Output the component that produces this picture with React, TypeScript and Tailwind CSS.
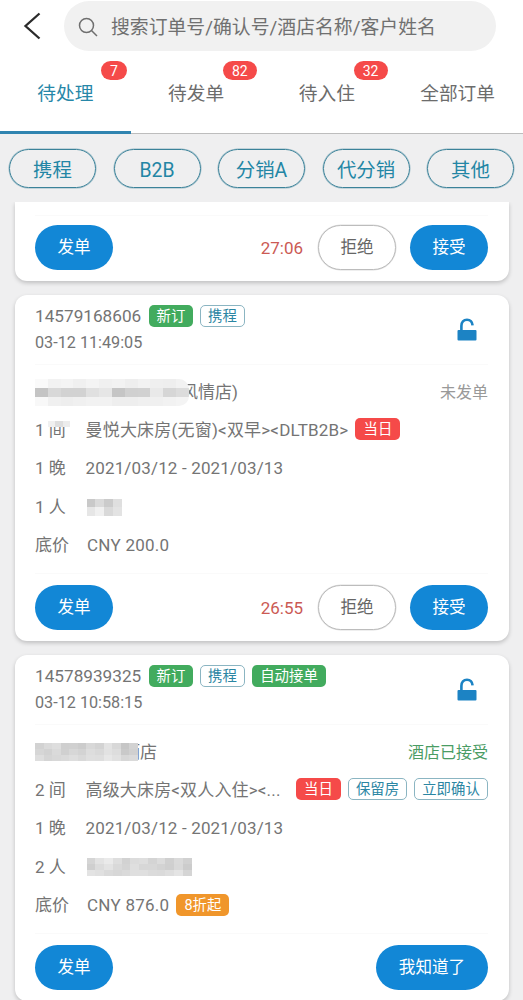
import React from "react";
import clsx from "clsx";

type Cell = string;

function Mosaic({ rows, className }: { rows: Cell[][]; className: string }) {
  return (
    <span className={clsx("flex flex-col overflow-hidden", className)}>
      {rows.map((row, i) => (
        <span key={i} className="flex flex-1">
          {row.map((c, j) => (
            <span key={j} className="flex-1" style={{ backgroundColor: "#" + c }} />
          ))}
        </span>
      ))}
    </span>
  );
}

const tagTones = {
  green: "bg-[#42ab5e] text-white",
  red: "bg-[#f54a49] text-white",
  orange: "bg-[#f0962b] text-white",
  outline: "border border-[#8bb5c2] bg-white text-[#2b86a3]",
};

function Tag({ tone, className, children }: { tone: keyof typeof tagTones; className: string; children: React.ReactNode }) {
  return (
    <span
      className={clsx(
        "flex h-[22px] shrink-0 items-center justify-center rounded-[5px] pt-[2px] text-[14.4px] leading-none tracking-normal whitespace-nowrap",
        tagTones[tone],
        className,
      )}
    >
      {children}
    </span>
  );
}

function PillButton({ outline, wide, children }: { outline?: boolean; wide?: boolean; children: React.ReactNode }) {
  return (
    <button
      className={clsx(
        "flex h-[45px] items-center justify-center rounded-full pt-[2px] text-[16.6px] leading-none",
        wide ? "w-[112px]" : "w-[78px]",
        outline ? "border border-[#bcbcbc] bg-white text-[#666] shadow-[0_0_0_0.5px_#bcbcbc80]" : "bg-[#1287d6] text-white",
      )}
    >
      {children}
    </button>
  );
}

function UnlockIcon() {
  return (
    <svg width="20" height="23" viewBox="0 0 20 23" className="mt-[23px] mr-[11px] shrink-0">
      <path d="M4.400 12.500V8C4.400 4 6.600 1.800 10 1.800c3.200 0 5.200 2 5.600 5.600" fill="none" stroke="#1c83c4" strokeWidth="2.600" />
      <rect x="0.500" y="12" width="19" height="10.500" rx="1" fill="#1c83c4" />
    </svg>
  );
}

function Row({ label, children }: { label: React.ReactNode; children: React.ReactNode }) {
  return (
    <div className="flex h-[38.3px] items-center tracking-[0.16px]">
      <span className="w-[50.5px] shrink-0 tracking-normal whitespace-nowrap">{label}</span>
      {children}
    </div>
  );
}

function Actions({ timer }: { timer?: string }) {
  return (
    <div className="flex items-center justify-between">
      <PillButton>发单</PillButton>
      {timer ? (
        <div className="flex items-center gap-[14px]">
          <span className="mr-[1px] pt-[1px] text-[17px] leading-none text-[#cb5a54]">{timer}</span>
          <PillButton outline>拒绝</PillButton>
          <PillButton>接受</PillButton>
        </div>
      ) : (
        <PillButton wide>我知道了</PillButton>
      )}
    </div>
  );
}

function Card({
  id,
  time,
  auto,
  hotel,
  status,
  children,
  timer,
}: {
  id: string;
  time: string;
  auto?: boolean;
  hotel: React.ReactNode;
  status: React.ReactNode;
  children: React.ReactNode;
  timer?: string;
}) {
  return (
    <section className="flex h-[346px] shrink-0 flex-col rounded-[12px] bg-white pr-[21px] pl-5 shadow-[0_2px_4px_rgba(0,0,0,0.2)]">
      <div className="flex h-[70px] shrink-0 justify-between border-b border-[#fafafa]">
        <div className="flex flex-col pt-[10px]">
          <div className="flex h-[22px] items-center">
            <span className="w-[114px] pt-[2px] text-[17.2px] leading-none text-[#747474]">{id}</span>
            <Tag tone="green" className="w-[44px]">新订</Tag>
            <Tag tone="outline" className="ml-[7px] w-[45px]">携程</Tag>
            {auto && <Tag tone="green" className="ml-[7px] w-[74px]">自动接单</Tag>}
          </div>
          <span className="mt-[7px] text-[16.200px] leading-[18px] text-[#747474]">{time}</span>
        </div>
        <UnlockIcon />
      </div>
      <div className="flex h-[209px] shrink-0 flex-col border-b border-[#fafafa] pt-[8px] text-[17px] leading-none text-[#747474]">
        <div className="flex h-[38.3px] items-center justify-between">
          {hotel}
          {status}
        </div>
        {children}
      </div>
      <div className="pt-[11px]">
        <Actions timer={timer} />
      </div>
    </section>
  );
}

const tabs = [
  { name: "待处理", count: "7", badge: "left-[101px] w-[26px]" },
  { name: "待发单", count: "82", badge: "left-[92px] w-[34px]" },
  { name: "待入住", count: "32", badge: "left-[92px] w-[34px]" },
  { name: "全部订单" },
];

const filters = ["携程", "B2B", "分销A", "代分销", "其他"];

const hotelMosaicA = [
  ["fafafa", "f2f2f2", "f4f4f4", "f0f0f0", "f4f4f4", "f0f0f0", "f2f2f2", "eeeeee", "f2f2f2", "efefef", "eeeeee", "f2f2f2"],
  ["c4c4c4", "d8d8d8", "d2d2d2", "d2d2d2", "e0e0e0", "e6e6e6", "c5c5c5", "d0d0d0", "d1d1d1", "e9e9e9", "d6d6d6", "dcdcdc"],
  ["f8f8f8", "f0f0f0", "eeeeee", "f0f0f0", "f2f2f2", "f2f2f2", "eeeeee", "eeeeee", "f0f0f0", "f0f0f0", "f2f2f2", "f4f4f4"],
];

const hotelMosaicB = [
  ["d2d2d2", "dadada", "dedede", "cfcfcf", "d0d0d0", "cccccc", "d8d8d8", "d3d3d3", "e3e3e3", "d8d8d8", "c6c6c6", "d2d2d2"],
  ["d6d6d6", "d2d2d2", "dadada", "d0d0d0", "d7d7d7", "d3d3d3", "dddddd", "d9d9d9", "e2e2e2", "dddddd", "c9c9c9", "d0d0d0"],
  ["dedede", "d5d5d5", "d8d8d8", "dadada", "dedede", "d9d9d9", "dfdfdf", "dedede", "e7e7e7", "e1e1e1", "d7d7d7", "dadada"],
];

const labelMosaic = [["f0f0f0", "dedede", "ececec"]];

const guestMosaicA = [
  ["c9c9c9", "dadada", "cbcbcb", "dfdfdf"],
  ["e6e6e6", "f0f0f0", "d9d9d9", "e3e3e3"],
];

const guestMosaicB = [
  ["d5d5d5", "e3e3e3", "eaeaea", "dedede", "d2d2d2", "dcdcdc", "dedede", "d4d4d4", "dcdcdc", "d0d0d0", "dadada", "d1d1d1"],
  ["cfcfcf", "dcdcdc", "e3e3e3", "d9d9d9", "d4d4d4", "dfdfdf", "d7d7d7", "d7d7d7", "d3d3d3", "cfcfcf", "d9d9d9", "cccccc"],
  ["e3e3e3", "e0e0e0", "dadada", "d7d7d7", "dadada", "dfdfdf", "dfdfdf", "dbdbdb", "dadada", "dedede", "e4e4e4", "d5d5d5"],
];

export default function App() {
  return (
    <div className="flex h-[1000px] w-[523px] flex-col overflow-hidden bg-[#efeff0] font-['Roboto','Noto_Sans_CJK_SC',sans-serif]">
      <header className="flex h-[54px] shrink-0 items-start bg-white">
        <svg width="18" height="28" viewBox="0 0 18 28" className="mt-[12px] ml-[23px] shrink-0">
          <path d="M16.500 1.500 2.500 14l14 12.500" fill="none" stroke="#2b2b2b" strokeWidth="2.300" />
        </svg>
        <div className="mt-[1px] ml-[23px] flex h-[50px] w-[432px] items-center rounded-full bg-[#f1f1f1] pl-[14px]">
          <svg width="20" height="20" viewBox="0 0 20 20" className="mt-[2px] shrink-0">
            <circle cx="8.500" cy="8.500" r="7" fill="none" stroke="#6f6f6f" strokeWidth="1.500" />
            <path d="M13.500 13.500 19 19" stroke="#6f6f6f" strokeWidth="1.500" />
          </svg>
          <span className="ml-[13px] pt-[4px] text-[18.850px] leading-none whitespace-nowrap text-[#707070]">
            搜索订单号/确认号/酒店名称/客户姓名
          </span>
        </div>
      </header>

      <nav className="grid h-[80px] shrink-0 grid-cols-4 bg-white">
        {tabs.map((t, i) => (
          <div
            key={t.name}
            className={clsx(
              "relative flex justify-center pt-[31px] text-[18.700px] leading-[19px]",
              i === 0 ? "border-b-[3px] border-[#3084b0] text-[#2787a8]" : "border-b border-[#bdbdbd] text-[#6c6c6c]",
            )}
          >
            {t.name}
            {t.count && (
              <span
                className={clsx(
                  "absolute top-[7px] flex h-[19px] items-center justify-center rounded-full bg-[#f54a49] pt-[1px] text-[14px] leading-none text-white",
                  t.badge,
                )}
              >
                {t.count}
              </span>
            )}
          </div>
        ))}
      </nav>

      <div className="flex h-[68px] shrink-0 justify-between px-[9px] pt-[15px]">
        {filters.map((f) => (
          <span
            key={f}
            className="flex h-[39px] w-[87px] items-center justify-center rounded-full border border-[#3b8299] pt-[4px] text-[19.400px] leading-none text-[#2386a5] shadow-[0_0_0_0.5px_#3b829980]"
          >
            {f}
          </span>
        ))}
      </div>

      <main className="flex flex-1 flex-col gap-[14px] overflow-hidden pr-[14px] pl-[15px]">
        <section className="h-[79px] shrink-0 rounded-b-[12px] bg-white pr-[21px] pl-5 shadow-[0_2px_4px_rgba(0,0,0,0.2)]">
          <div className="mb-[9px] h-[14px] border-b border-[#fafafa]" />
          <Actions timer="27:06" />
        </section>

        <Card
          id="14579168606"
          time="03-12 11:49:05"
          timer="26:55"
          hotel={
            <span className="flex items-center">
              <Mosaic rows={hotelMosaicA} className="z-10 h-[27px] w-[154px] rounded-r-[10px]" />
              <span className="-ml-[8px]">风情店)</span>
            </span>
          }
          status={<span className="pt-[1px] text-[16px] text-[#999]">未发单</span>}
        >
          <Row
            label={
              <span className="relative">
                1 间
                <Mosaic rows={labelMosaic} className="absolute top-[1px] left-[13px] h-[6px] w-[22px]" />
              </span>
            }
          >
            <span className="pt-[1px] text-[17px] tracking-[0.2px] whitespace-nowrap">曼悦大床房(无窗)&lt;双早&gt;&lt;DLTB2B&gt;</span>
            <Tag tone="red" className="mb-[3px] ml-[7px] w-[45px]">当日</Tag>
          </Row>
          <Row label="1 晚">2021/03/12 - 2021/03/13</Row>
          <Row label="1 人">
            <Mosaic rows={guestMosaicA} className="ml-[1px] h-[17px] w-[35px]" />
          </Row>
          <Row label="底价">
            <span className="ml-[1.5px] tracking-[0.25px]">CNY 200.0</span>
          </Row>
        </Card>

        <Card
          id="14578939325"
          time="03-12 10:58:15"
          auto
          hotel={
            <span className="flex items-center">
              <Mosaic rows={hotelMosaicB} className="z-10 h-[18px] w-[103px]" />
              <span className="-ml-[15px]">酒店</span>
            </span>
          }
          status={<span className="pt-[1px] text-[16px] text-[#4a9c64]">酒店已接受</span>}
        >
          <Row label="2 间">
            <span className="w-[200px] truncate text-[17px] leading-[24px]">高级大床房&lt;双人入住&gt;&lt;...</span>
            <span className="mb-[3px] ml-auto flex gap-[7px]">
              <Tag tone="red" className="w-[45px]">当日</Tag>
              <Tag tone="outline" className="w-[59px]">保留房</Tag>
              <Tag tone="outline" className="w-[74px]">立即确认</Tag>
            </span>
          </Row>
          <Row label="1 晚">2021/03/12 - 2021/03/13</Row>
          <Row label="2 人">
            <Mosaic rows={guestMosaicB} className="ml-[1px] h-[18px] w-[105px]" />
          </Row>
          <Row label="底价">
            <span className="ml-[1.5px] tracking-[0.25px]">CNY 876.0</span>
            <Tag tone="orange" className="mb-[1px] ml-[7px] w-[53px]">8折起</Tag>
          </Row>
        </Card>
      </main>
    </div>
  );
}
